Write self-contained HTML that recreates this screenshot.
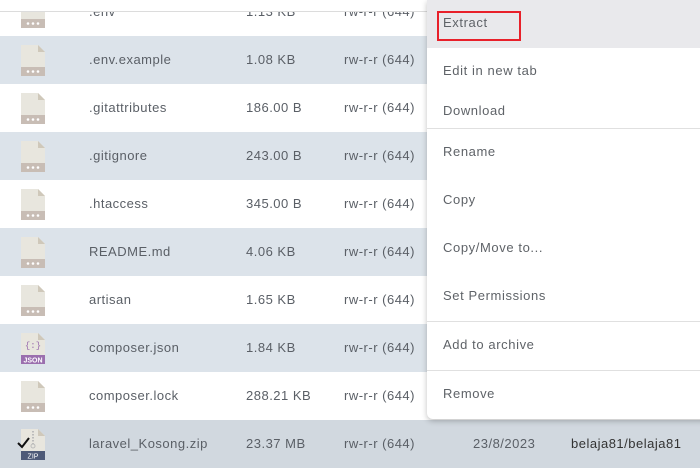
<!DOCTYPE html>
<html><head><meta charset="utf-8"><style>
*{margin:0;padding:0;box-sizing:border-box}
body{width:700px;height:473px;overflow:hidden;background:#fff;font-family:"Liberation Sans",sans-serif;font-size:13px;color:#5a5f66;position:relative;letter-spacing:0.5px}
.hdr{position:absolute;left:0;top:0;width:700px;height:12px;background:#fff;border-bottom:1px solid #dcdcdc;z-index:2}
.row{position:absolute;left:0;width:700px;height:48px}
.row.a{background:#dce3ea}
.row.z{background:#d1d8df}
.row span{position:absolute;top:16px;white-space:nowrap}
.n{left:89px}.s{left:246px}.p{left:344px}
.ic{position:absolute;left:21px;top:9px;width:24px;height:31px}
.menu{position:absolute;left:427px;top:0;width:280px;height:419px;background:#fff;border-radius:0 0 0 6px;box-shadow:0 2px 6px rgba(0,0,0,.25);z-index:3}
.mi{position:absolute;left:16px;color:#5f6368;font-size:13px;letter-spacing:0.6px}
.dv{position:absolute;left:0;width:280px;height:1px;background:#e0e0e0}
</style></head><body>
<div class="hdr"></div>
<svg width="0" height="0" style="position:absolute"><defs>
<g id="doc"><path d="M0 0H17L24 7V31H0Z" fill="#e8e6de"/><path d="M17 0L24 7H17Z" fill="#cfc8ba"/><rect x="0" y="22" width="24" height="9" fill="#c8bdb5"/><circle cx="7" cy="26.5" r="1.3" fill="#fff"/><circle cx="12" cy="26.5" r="1.3" fill="#fff"/><circle cx="17" cy="26.5" r="1.3" fill="#fff"/></g>
</defs></svg>

<div class="row" style="top:-12px"><svg class="ic" viewBox="0 0 24 31"><use href="#doc"/></svg><span class="n">.env</span><span class="s">1.13 KB</span><span class="p">rw-r-r (644)</span></div>
<div class="row a" style="top:36px"><svg class="ic" viewBox="0 0 24 31"><use href="#doc"/></svg><span class="n">.env.example</span><span class="s">1.08 KB</span><span class="p">rw-r-r (644)</span></div>
<div class="row" style="top:84px"><svg class="ic" viewBox="0 0 24 31"><use href="#doc"/></svg><span class="n">.gitattributes</span><span class="s">186.00 B</span><span class="p">rw-r-r (644)</span></div>
<div class="row a" style="top:132px"><svg class="ic" viewBox="0 0 24 31"><use href="#doc"/></svg><span class="n">.gitignore</span><span class="s">243.00 B</span><span class="p">rw-r-r (644)</span></div>
<div class="row" style="top:180px"><svg class="ic" viewBox="0 0 24 31"><use href="#doc"/></svg><span class="n">.htaccess</span><span class="s">345.00 B</span><span class="p">rw-r-r (644)</span></div>
<div class="row a" style="top:228px"><svg class="ic" viewBox="0 0 24 31"><use href="#doc"/></svg><span class="n">README.md</span><span class="s">4.06 KB</span><span class="p">rw-r-r (644)</span></div>
<div class="row" style="top:276px"><svg class="ic" viewBox="0 0 24 31"><use href="#doc"/></svg><span class="n">artisan</span><span class="s">1.65 KB</span><span class="p">rw-r-r (644)</span></div>
<div class="row a" style="top:324px"><svg class="ic" viewBox="0 0 24 31"><path d="M0 0H17L24 7V31H0Z" fill="#e8e6de"/><path d="M17 0L24 7H17Z" fill="#cfc8ba"/><rect x="0" y="22" width="24" height="9" fill="#9b6fae"/><text x="12" y="29.5" font-size="7" fill="#fff" text-anchor="middle" font-family="Liberation Sans" font-weight="bold" letter-spacing="0">JSON</text><text x="12" y="15" font-size="9" fill="#9b6fae" text-anchor="middle" font-family="Liberation Mono" letter-spacing="0">{:}</text></svg><span class="n">composer.json</span><span class="s">1.84 KB</span><span class="p">rw-r-r (644)</span></div>
<div class="row" style="top:372px"><svg class="ic" viewBox="0 0 24 31"><use href="#doc"/></svg><span class="n">composer.lock</span><span class="s">288.21 KB</span><span class="p">rw-r-r (644)</span></div>
<div class="row z" style="top:420px"><svg class="ic" viewBox="0 0 24 31" style="overflow:visible"><path d="M0 0H17L24 7V31H0Z" fill="#e8e6de"/><path d="M17 0L24 7H17Z" fill="#cfc8ba"/><rect x="0" y="22" width="24" height="9" fill="#4e5a78"/><text x="12" y="29.5" font-size="7" fill="#fff" text-anchor="middle" font-family="Liberation Sans" letter-spacing="0">ZIP</text><path d="M12 2V16" stroke="#bbb" stroke-width="2" stroke-dasharray="1.5 1.5"/><circle cx="12" cy="17" r="2" fill="none" stroke="#bbb"/><path d="M-3 14L1 18L8 9" stroke="#111" stroke-width="2" fill="none"/></svg><span class="n">laravel_Kosong.zip</span><span class="s">23.37 MB</span><span class="p">rw-r-r (644)</span><span style="left:473px">23/8/2023</span><span style="left:571px;color:#333">belaja81/belaja81</span></div>
<div style="position:absolute;left:0;top:468px;width:700px;height:5px;background:#fff"></div>

<div class="menu">
<div style="position:absolute;left:0;top:0;width:280px;height:48px;background:#e9e9ec"></div>
<div class="mi" style="top:15px">Extract</div>
<div style="position:absolute;left:10px;top:11px;width:84px;height:30px;border:2px solid #e8202a"></div>
<div class="mi" style="top:63px">Edit in new tab</div>
<div class="mi" style="top:103px">Download</div>
<div class="dv" style="top:128px"></div>
<div class="mi" style="top:144px">Rename</div>
<div class="mi" style="top:192px">Copy</div>
<div class="mi" style="top:240px">Copy/Move to...</div>
<div class="mi" style="top:288px">Set Permissions</div>
<div class="dv" style="top:321px"></div>
<div class="mi" style="top:337px">Add to archive</div>
<div class="dv" style="top:370px"></div>
<div class="mi" style="top:386px">Remove</div>
</div>
</body></html>
